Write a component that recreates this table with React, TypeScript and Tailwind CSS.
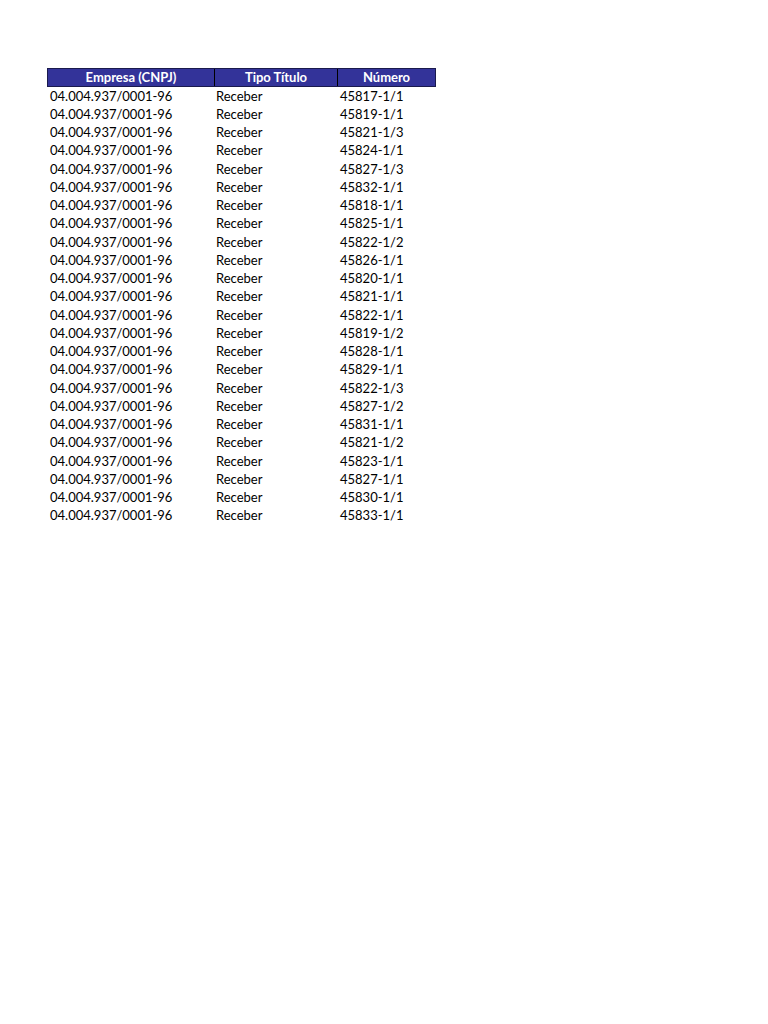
const rows = [
  '45817-1/1', '45819-1/1', '45821-1/3', '45824-1/1', '45827-1/3', '45832-1/1',
  '45818-1/1', '45825-1/1', '45822-1/2', '45826-1/1', '45820-1/1', '45821-1/1',
  '45822-1/1', '45819-1/2', '45828-1/1', '45829-1/1', '45822-1/3', '45827-1/2',
  '45831-1/1', '45821-1/2', '45823-1/1', '45827-1/1', '45830-1/1', '45833-1/1',
];

export default function App() {
  return (
    <div className="min-h-[1024px] w-[768px] bg-white pt-[68px] pl-[47px] text-[13px] text-black" style={{ fontFamily: 'Lato, "Open Sans", sans-serif' }}>
      <div className="w-[389px]">
        <div className="flex h-[19px] border border-[#1a1a4d] bg-[#333399] font-bold text-white">
          <div className="flex w-[167px] items-center justify-center border-r border-black">Empresa (CNPJ)</div>
          <div className="flex w-[123px] items-center justify-center border-r border-black">Tipo Título</div>
          <div className="flex flex-1 items-center justify-center">Número</div>
        </div>
        {rows.map((n, i) => (
          <div key={i} className="flex h-[18.25px] items-center leading-none">
            <div className="w-[167px] pl-[3px]">04.004.937/0001-96</div>
            <div className="w-[123px] pl-[2px]">Receber</div>
            <div className="flex-1 pl-[3px]">{n}</div>
          </div>
        ))}
      </div>
    </div>
  );
}
